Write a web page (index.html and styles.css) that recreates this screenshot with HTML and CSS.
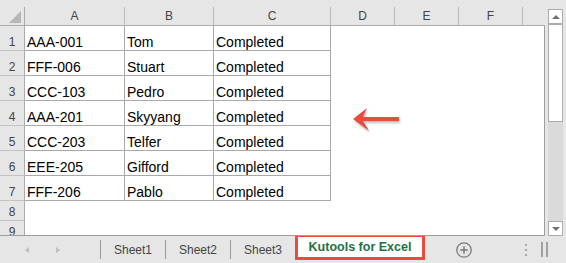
FILE: index.html
```html
<!DOCTYPE html>
<html lang="en">
<head>
    <meta charset="UTF-8">
    <title>Kutools for Excel</title>
    <link rel="stylesheet" href="styles.css">
</head>
<body>

    <div class="sheet">
        <div class="grid">
            <div class="corner"><span class="corner-tri"></span></div>
            <div class="col-hd">A</div>
            <div class="col-hd">B</div>
            <div class="col-hd">C</div>
            <div class="col-hd">D</div>
            <div class="col-hd">E</div>
            <div class="col-hd">F</div>
            <div class="col-hd col-last"></div>

            <div class="row-hd">1</div>
            <div class="cell data">AAA-001</div>
            <div class="cell data">Tom</div>
            <div class="cell data">Completed</div>
            <div class="cell"></div><div class="cell"></div><div class="cell"></div><div class="cell cell-last"></div>

            <div class="row-hd">2</div>
            <div class="cell data">FFF-006</div>
            <div class="cell data">Stuart</div>
            <div class="cell data">Completed</div>
            <div class="cell"></div><div class="cell"></div><div class="cell"></div><div class="cell cell-last"></div>

            <div class="row-hd">3</div>
            <div class="cell data">CCC-103</div>
            <div class="cell data">Pedro</div>
            <div class="cell data">Completed</div>
            <div class="cell"></div><div class="cell"></div><div class="cell"></div><div class="cell cell-last"></div>

            <div class="row-hd">4</div>
            <div class="cell data">AAA-201</div>
            <div class="cell data">Skyyang</div>
            <div class="cell data">Completed</div>
            <div class="cell"></div><div class="cell"></div><div class="cell"></div><div class="cell cell-last"></div>

            <div class="row-hd">5</div>
            <div class="cell data">CCC-203</div>
            <div class="cell data">Telfer</div>
            <div class="cell data">Completed</div>
            <div class="cell"></div><div class="cell"></div><div class="cell"></div><div class="cell cell-last"></div>

            <div class="row-hd">6</div>
            <div class="cell data">EEE-205</div>
            <div class="cell data">Gifford</div>
            <div class="cell data">Completed</div>
            <div class="cell"></div><div class="cell"></div><div class="cell"></div><div class="cell cell-last"></div>

            <div class="row-hd">7</div>
            <div class="cell data">FFF-206</div>
            <div class="cell data">Pablo</div>
            <div class="cell data">Completed</div>
            <div class="cell"></div><div class="cell"></div><div class="cell"></div><div class="cell cell-last"></div>

            <div class="row-hd">8</div>
            <div class="cell"></div><div class="cell"></div><div class="cell"></div>
            <div class="cell"></div><div class="cell"></div><div class="cell"></div><div class="cell cell-last"></div>

            <div class="row-hd">9</div>
            <div class="cell"></div><div class="cell"></div><div class="cell"></div>
            <div class="cell"></div><div class="cell"></div><div class="cell"></div><div class="cell cell-last"></div>
        </div>

        <div class="vscroll">
            <div class="sb-btn"><span class="sb-up"></span></div>
            <div class="sb-thumb"></div>
            <div class="sb-track"></div>
            <div class="sb-btn"><span class="sb-down"></span></div>
        </div>

        <!-- red pointer arrow -->
        <svg class="arrow" width="56" height="32" viewBox="0 0 56 32">
            <path d="M3 15 L17 4 L13 13 L49 13 L49 17 L13 17 L19 27 Z" fill="#ef4b3d"/>
        </svg>
    </div>

    <div class="tabbar">
        <div class="tab-nav">
            <span class="nav-left"></span>
            <span class="nav-right"></span>
        </div>
        <div class="tab tab-sep">Sheet1</div>
        <div class="tab tab-sep">Sheet2</div>
        <div class="tab tab-sep">Sheet3</div>
        <div class="tab-active">Kutools for Excel</div>
        <svg class="add-sheet" width="16" height="16" viewBox="0 0 16 16">
            <circle cx="8" cy="8" r="7.2" fill="none" stroke="#7a7a7a" stroke-width="1.3"/>
            <path d="M8 4.2 V11.8 M4.2 8 H11.8" stroke="#7a7a7a" stroke-width="1.5"/>
        </svg>
        <div class="tab-dots">
            <span></span><span></span><span></span>
        </div>
        <div class="tab-split">
            <span></span><span></span>
        </div>
    </div>

</body>
</html>
```

FILE: styles.css
```css
body {
    margin: 0;
    padding: 0;
    background-color: #e6e6e6;
    font-family: "Liberation Sans", Arial, sans-serif;
    width: 566px;
    height: 263px;
    overflow: hidden;
}

.sheet {
    position: relative;
    display: flex;
    height: 236px;
}

.grid {
    display: grid;
    grid-template-columns: 25px 100px 89px 117px 64px 64px 64px 22px;
    grid-template-rows: 19px repeat(7, 25px) 20px 20px;
    width: 545px;
    height: 228px;
    margin-top: 7px;
    overflow: hidden;
    border-bottom: 1px solid #9e9e9e;
}

.corner {
    display: flex;
    justify-content: flex-end;
    align-items: flex-end;
    padding: 0 3px 2px 0;
    border-right: 1px solid #ababab;
    border-bottom: 1px solid #ababab;
}

.corner-tri {
    width: 0;
    height: 0;
    border-left: 12px solid transparent;
    border-bottom: 12px solid #b6b6b6;
}

.col-hd {
    display: flex;
    align-items: center;
    justify-content: center;
    font-size: 12px;
    line-height: 14px;
    color: #444;
    border-right: 1px solid #bcbcbc;
    border-bottom: 1px solid #ababab;
}

.col-hd.col-last {
    border-right: none;
}

.row-hd {
    display: flex;
    align-items: flex-end;
    justify-content: center;
    padding-bottom: 1px;
    font-size: 12px;
    line-height: 14px;
    color: #444;
    border-right: 1px solid #ababab;
    border-bottom: 1px solid #c4c4c4;
}

.cell {
    background: white;
    display: flex;
    align-items: flex-end;
    padding-left: 2px;
    font-size: 14px;
    line-height: 16px;
    color: #000;
    white-space: nowrap;
}

.cell.data {
    border-right: 1px solid #a9a9a9;
    border-bottom: 1px solid #a9a9a9;
}

.cell.cell-last {
    border-right: 1px solid #9e9e9e;
}

.vscroll {
    display: flex;
    flex-direction: column;
    width: 15px;
    padding: 9px 3px 0 3px;
}

.sb-btn {
    display: flex;
    align-items: center;
    justify-content: center;
    height: 13px;
    background: white;
    border: 1px solid #ababab;
}

.sb-up {
    width: 0;
    height: 0;
    border-left: 4px solid transparent;
    border-right: 4px solid transparent;
    border-bottom: 4px solid #707070;
}

.sb-down {
    width: 0;
    height: 0;
    border-left: 4px solid transparent;
    border-right: 4px solid transparent;
    border-top: 4px solid #707070;
}

.sb-thumb {
    height: 96px;
    background: white;
    border: 1px solid #ababab;
}

.sb-track {
    flex: 1;
    background: #dadada;
}

.arrow {
    position: absolute;
    left: 350px;
    top: 104px;
    filter: drop-shadow(1px 2px 1px rgba(0, 0, 0, 0.25));
}

.tabbar {
    display: flex;
    align-items: center;
    height: 27px;
}

.tab-nav {
    display: flex;
    align-items: center;
    width: 100px;
    height: 19px;
}

.nav-left {
    margin-left: 25px;
    width: 0;
    height: 0;
    border-top: 3.5px solid transparent;
    border-bottom: 3.5px solid transparent;
    border-right: 4px solid #c0c0c0;
}

.nav-right {
    margin-left: 27px;
    width: 0;
    height: 0;
    border-top: 3.5px solid transparent;
    border-bottom: 3.5px solid transparent;
    border-left: 4px solid #c0c0c0;
}

.tab {
    display: flex;
    align-items: center;
    justify-content: center;
    height: 19px;
    font-size: 12px;
    color: #444;
}

.tab-sep {
    border-left: 1px solid #9a9a9a;
    width: 64px;
}

.tab-sep:nth-child(4) {
    width: 64px;
}

.tab-active {
    align-self: flex-start;
    margin-top: -2px;
    display: flex;
    align-items: center;
    justify-content: center;
    width: 124px;
    height: 20px;
    background: white;
    border: 3px solid #eb4a3e;
    font-size: 12.5px;
    font-weight: bold;
    color: #217346;
}

.add-sheet {
    margin-left: 31px;
}

.tab-dots {
    display: flex;
    flex-direction: column;
    gap: 3px;
    margin-left: 53px;
}

.tab-dots span {
    width: 2px;
    height: 2px;
    background: #a8a8a8;
}

.tab-split {
    display: flex;
    gap: 3px;
    margin-left: 14px;
}

.tab-split span {
    width: 2px;
    height: 15px;
    background: #a0a0a0;
}
```
